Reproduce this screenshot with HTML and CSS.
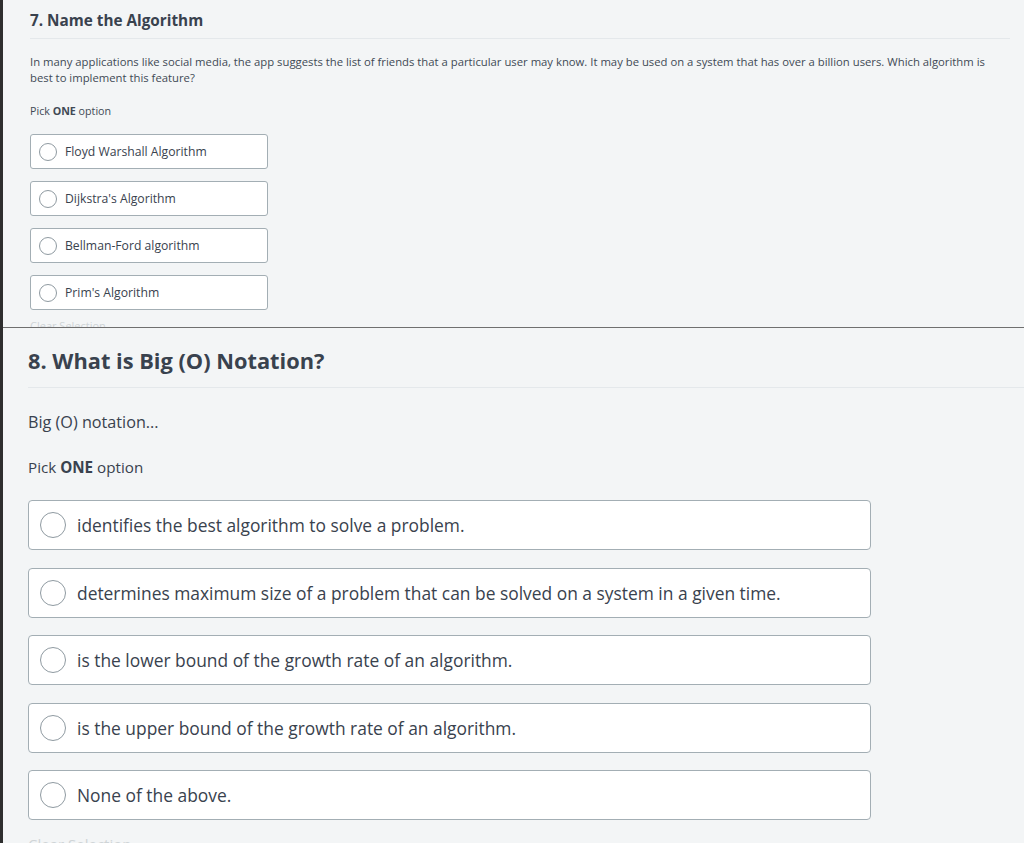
FILE: index.html
```html
<!DOCTYPE html>
<html>
<head>
<meta charset="utf-8">
<link rel="stylesheet" href="styles.css">
</head>
<body>
<div class="frame">
  <section class="q q-small">
    <h2 class="q-title">7. Name the Algorithm</h2>
    <div class="q-sep"></div>
    <p class="q-text">In many applications like social media, the app suggests the list of friends that a particular user may know. It may be used on a system that has over a billion users. Which algorithm is best to implement this feature?</p>
    <p class="q-pick">Pick <b>ONE</b> option</p>
    <div class="opts">
      <div class="opt"><span class="radio"></span><span>Floyd Warshall Algorithm</span></div>
      <div class="opt"><span class="radio"></span><span>Dijkstra's Algorithm</span></div>
      <div class="opt"><span class="radio"></span><span>Bellman-Ford algorithm</span></div>
      <div class="opt"><span class="radio"></span><span>Prim's Algorithm</span></div>
    </div>
    <div class="clear">Clear Selection</div>
  </section>
  <section class="q q-large">
    <h2 class="q-title">8. What is Big (O) Notation?</h2>
    <div class="q-sep"></div>
    <p class="q-text">Big (O) notation...</p>
    <p class="q-pick">Pick <b>ONE</b> option</p>
    <div class="opts">
      <div class="opt"><span class="radio"></span><span>identifies the best algorithm to solve a problem.</span></div>
      <div class="opt"><span class="radio"></span><span>determines maximum size of a problem that can be solved on a system in a given time.</span></div>
      <div class="opt"><span class="radio"></span><span>is the lower bound of the growth rate of an algorithm.</span></div>
      <div class="opt"><span class="radio"></span><span>is the upper bound of the growth rate of an algorithm.</span></div>
      <div class="opt"><span class="radio"></span><span>None of the above.</span></div>
    </div>
    <div class="clear">Clear Selection</div>
  </section>
</div>
</body>
</html>
```
FILE: styles.css
```css
html, body {
  margin: 0;
  padding: 0;
  background: #f3f5f6;
}
body {
  font-family: "Open Sans", "Noto Sans", sans-serif;
  color: #39424e;
  width: 1024px;
  height: 843px;
  overflow: hidden;
}
.frame {
  border-left: 3px solid #2e2e2e;
  height: 843px;
  box-sizing: border-box;
}
.q { overflow: hidden; }
.q p { margin: 0; }
.q-title { margin: 0; font-weight: 700; }
.q-sep { background: #e4e8eb; height: 1px; }
.opts { display: flex; flex-direction: column; }
.opt {
  background: #fff;
  border: 1px solid #a3aeb4;
  display: flex;
  align-items: center;
  box-sizing: border-box;
}
.radio {
  border: 1px solid #8f9aa1;
  border-radius: 50%;
  box-sizing: border-box;
  background: #fff;
  flex: none;
}
.clear { color: #cfd4d7; }

/* question 7, small */
.q-small {
  height: 328px;
  padding: 10px 0 0 27px;
  box-sizing: border-box;
  border-bottom: 1px solid #6f6f6f;
}
.q-small .q-title { font-size: 15.3px; line-height: 20px; }
.q-small .q-sep { margin: 8px 14px 0 0; }
.q-small .q-text { font-size: 11.3px; line-height: 16px; margin-top: 15px; padding-right: 16px; color: #414a55; }
.q-small .q-pick { font-size: 10.7px; line-height: 16px; margin-top: 17px; color: #414a55; }
.q-small .opts { margin-top: 15px; gap: 12px; width: 238px; }
.q-small .opt { height: 35px; border-radius: 3px; padding-left: 8px; gap: 8px; font-size: 12.2px; }
.q-small .radio { width: 18px; height: 18px; }
.q-small .clear { font-size: 11px; line-height: 14px; margin-top: 9px; }

/* question 8, large */
.q-large {
  padding: 19px 0 0 25px;
  box-sizing: border-box;
}
.q-large .q-title { font-size: 21.8px; line-height: 28px; }
.q-large .q-sep { margin-top: 12px; }
.q-large .q-text { font-size: 16.2px; line-height: 22px; margin-top: 23px; }
.q-large .q-pick { font-size: 15.2px; line-height: 22px; margin-top: 23px; }
.q-large .opts { margin-top: 22px; gap: 17.5px; width: 843px; }
.q-large .opt { height: 50px; border-radius: 4px; padding-left: 11px; gap: 11px; font-size: 17.4px; }
.q-large .radio { width: 26px; height: 26px; }
.q-large .clear { font-size: 15px; line-height: 20px; margin-top: 14px; }
```
